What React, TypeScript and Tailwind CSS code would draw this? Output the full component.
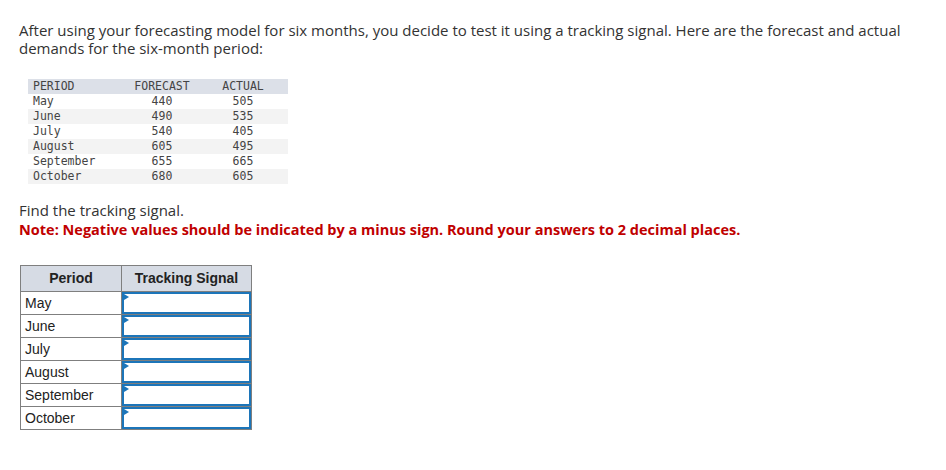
const data = [
  { period: "May", forecast: 440, actual: 505 },
  { period: "June", forecast: 490, actual: 535 },
  { period: "July", forecast: 540, actual: 405 },
  { period: "August", forecast: 605, actual: 495 },
  { period: "September", forecast: 655, actual: 665 },
  { period: "October", forecast: 680, actual: 605 },
]

function AnswerCell() {
  return (
    <td className="border border-[#7f7f7f] p-0">
      <div className="relative h-[22px] border-2 border-[#1c75b9] bg-white">
        <div className="absolute left-0 top-0 w-0 h-0 border-t-[3px] border-b-[3px] border-l-[5px] border-t-transparent border-b-transparent border-l-[#1c75b9]" />
      </div>
    </td>
  )
}

export default function App() {
  return (
    <div className="w-[946px] h-[470px] bg-white pt-[21px] pl-[19px] text-[#333] font-['Open_Sans','Liberation_Sans',sans-serif]">
      <p className="text-[15px] leading-[18px] w-[900px]">
        After using your forecasting model for six months, you decide to test it using a tracking signal. Here are the forecast and actual demands for the six-month period:
      </p>

      <table className="mt-[22px] ml-[9px] border-collapse font-['DejaVu_Sans_Mono','Liberation_Mono',monospace] text-[11.5px] leading-[15px] text-[#444]">
        <thead>
          <tr className="bg-[#dce0e8]">
            <th className="w-[98px] text-left font-normal pl-[5px] h-[14px]">PERIOD</th>
            <th className="w-[72px] text-center font-normal">FORECAST</th>
            <th className="w-[90px] text-center font-normal">ACTUAL</th>
          </tr>
        </thead>
        <tbody>
          {data.map((x, index) => (
            <tr key={x.period} className={index % 2 == 1 ? "bg-[#f3f3f3]" : "bg-white"}>
              <td className="pl-[5px] h-[15px]">{x.period}</td>
              <td className="text-center">{x.forecast}</td>
              <td className="text-center">{x.actual}</td>
            </tr>
          ))}
        </tbody>
      </table>

      <p className="mt-[16px] text-[15px] leading-[20px]">Find the tracking signal.</p>
      <p className="text-[14.5px] leading-[20px] font-bold text-[#c00000]">
        Note: Negative values should be indicated by a minus sign. Round your answers to 2 decimal places.
      </p>

      <table className="mt-[25px] ml-[1px] border-collapse font-['Liberation_Sans',Arial,sans-serif] text-[14px] text-[#222]">
        <thead>
          <tr className="bg-[#d6dbe4]">
            <th className="w-[101px] h-[26px] border border-[#7f7f7f] font-bold text-center p-0">Period</th>
            <th className="w-[130px] border border-[#7f7f7f] font-bold text-center p-0">Tracking Signal</th>
          </tr>
        </thead>
        <tbody>
          {data.map(x => (
            <tr key={x.period}>
              <td className="border border-[#7f7f7f] pl-[4px] py-0 leading-[16px]">{x.period}</td>
              <AnswerCell />
            </tr>
          ))}
        </tbody>
      </table>
    </div>
  )
}
